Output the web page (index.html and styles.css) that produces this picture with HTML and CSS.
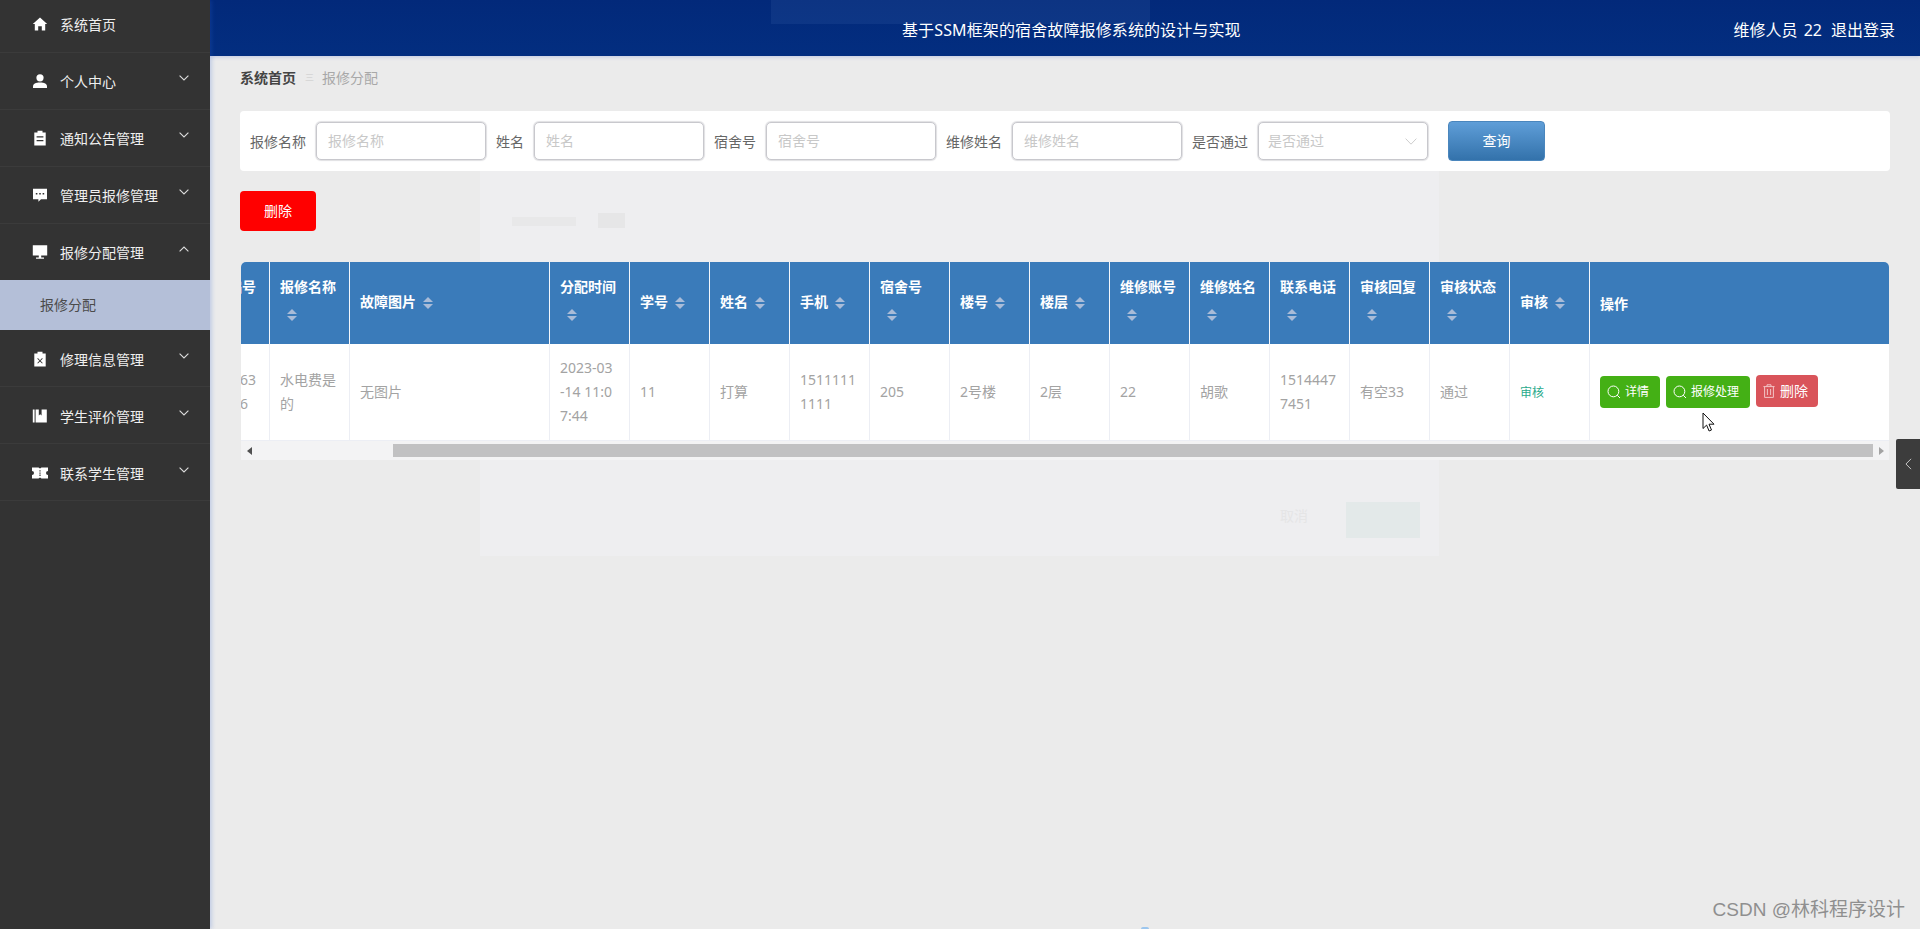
FILE: index.html
```html
<!DOCTYPE html>
<html lang="zh-CN">
<head>
<meta charset="utf-8">
<title>报修分配</title>
<link rel="stylesheet" href="styles.css">
</head>
<body>
<div class="app">
  <aside class="sidebar">
    <ul class="menu">
      <li class="menu-row"><svg class="mi" viewBox="0 0 16 16"><path d="M8 1.5 15.2 8H13.2v6.5H9.8V10.2H6.2v4.3H2.8V8H.8z"/></svg><span>系统首页</span></li>
      <li class="menu-row"><svg class="mi" viewBox="0 0 16 16"><circle cx="8" cy="4.8" r="3.6"/><path d="M1 15v-1.6c0-2.4 2.6-3.8 7-3.8s7 1.4 7 3.8V15z"/></svg><span>个人中心</span><svg class="chev" viewBox="0 0 10 6"><path d="M.6.6 5 5 9.4.6"/></svg></li>
      <li class="menu-row"><svg class="mi" viewBox="0 0 16 16"><path fill-rule="evenodd" d="M5.5.8h5V2.4h3.2v13.2H2.3V2.4h3.2zM4.6 6.2v1.2h6.8V6.2zM4.6 10v1.2h6.8V10z"/></svg><span>通知公告管理</span><svg class="chev" viewBox="0 0 10 6"><path d="M.6.6 5 5 9.4.6"/></svg></li>
      <li class="menu-row"><svg class="mi" viewBox="0 0 16 16"><path fill-rule="evenodd" d="M1 1.8h14v10.4H9l-2.6 2.6v-2.6H1zM3.8 6v1.6h1.6V6zM7.2 6v1.6h1.6V6zM10.6 6v1.6h1.6V6z"/></svg><span>管理员报修管理</span><svg class="chev" viewBox="0 0 10 6"><path d="M.6.6 5 5 9.4.6"/></svg></li>
      <li class="menu-row row-open"><svg class="mi" viewBox="0 0 16 16"><path d="M.8 1.2h14.4v10.4H.8zM6.8 11.6h2.4v2H12v1.2H4v-1.2h2.8z"/></svg><span>报修分配管理</span><svg class="chev" viewBox="0 0 10 6"><path d="M.6 5.4 5 1l4.4 4.4"/></svg></li>
      <li class="menu-sub">报修分配</li>
      <li class="menu-row row-low"><svg class="mi" viewBox="0 0 16 16"><path fill-rule="evenodd" d="M5.5.8h5V2.4h3.2v13.2H2.3V2.4h3.2zM5.9 7.1 8 9.2l2.1-2.1.6.6-2.1 2.1 2.1 2.1-.6.6L8 10.4l-2.1 2.1-.6-.6 2.1-2.1-2.1-2.1z"/></svg><span>修理信息管理</span><svg class="chev" viewBox="0 0 10 6"><path d="M.6.6 5 5 9.4.6"/></svg></li>
      <li class="menu-row row-low"><svg class="mi" viewBox="0 0 16 16"><path d="M.8 1.5h1.8v13H.8zM3.6 1.5h3.2v6l1.4-1.2 1.4 1.2v-6h5.2v13H3.6z"/></svg><span>学生评价管理</span><svg class="chev" viewBox="0 0 10 6"><path d="M.6.6 5 5 9.4.6"/></svg></li>
      <li class="menu-row row-low"><svg class="mi" viewBox="0 0 16 16"><path fill-rule="evenodd" d="M0 2.4h6.6l.7.9h1.4l.7-.9H16V6a2 2 0 0 0 0 4v3.6H9.4l-.7-.9H7.3l-.7.9H0V10a2 2 0 0 0 0-4zM7.4 5.2v1.4h1.2V5.2zM7.4 7.4v1.4h1.2V7.4zM7.4 9.6V11h1.2V9.6z"/></svg><span>联系学生管理</span><svg class="chev" viewBox="0 0 10 6"><path d="M.6.6 5 5 9.4.6"/></svg></li>
    </ul>
  </aside>

  <div class="main">
    <header class="topbar">
      <div class="topbar-title">基于SSM框架的宿舍故障报修系统的设计与实现</div>
      <div class="topbar-user"><span class="user-name">维修人员 22</span><span>退出登录</span></div>
    </header>

    <div class="page">
      <nav class="crumb"><b>系统首页</b><i>三</i><span>报修分配</span></nav>

      <form class="search">
        <label class="s-label">报修名称</label><div class="s-input">报修名称</div>
        <label class="s-label">姓名</label><div class="s-input">姓名</div>
        <label class="s-label">宿舍号</label><div class="s-input">宿舍号</div>
        <label class="s-label">维修姓名</label><div class="s-input">维修姓名</div>
        <label class="s-label">是否通过</label>
        <div class="s-input s-select">是否通过<svg viewBox="0 0 12 7"><path d="M.6.6 6 6.2 11.4.6"/></svg></div>
        <div class="s-query">查询</div>
      </form>

      <div class="tools"><div class="del-btn">删除</div></div>

      <div class="table-box">
        <div class="table-clip">
          <table class="grid">
            <colgroup>
              <col class="c80"><col class="c80"><col class="c200"><col class="c80"><col class="c80"><col class="c80"><col class="c80"><col class="c80"><col class="c80"><col class="c80"><col class="c80"><col class="c80"><col class="c80"><col class="c80"><col class="c80"><col class="c80"><col class="c300">
            </colgroup>
            <thead>
              <tr>
                <th>报修编号<span class="sort"><i class="up"></i><i class="down"></i></span></th>
                <th>报修名称<span class="sort"><i class="up"></i><i class="down"></i></span></th>
                <th>故障图片<span class="sort"><i class="up"></i><i class="down"></i></span></th>
                <th>分配时间<span class="sort"><i class="up"></i><i class="down"></i></span></th>
                <th>学号<span class="sort"><i class="up"></i><i class="down"></i></span></th>
                <th>姓名<span class="sort"><i class="up"></i><i class="down"></i></span></th>
                <th>手机<span class="sort"><i class="up"></i><i class="down"></i></span></th>
                <th>宿舍号<span class="sort"><i class="up"></i><i class="down"></i></span></th>
                <th>楼号<span class="sort"><i class="up"></i><i class="down"></i></span></th>
                <th>楼层<span class="sort"><i class="up"></i><i class="down"></i></span></th>
                <th>维修账号<span class="sort"><i class="up"></i><i class="down"></i></span></th>
                <th>维修姓名<span class="sort"><i class="up"></i><i class="down"></i></span></th>
                <th>联系电话<span class="sort"><i class="up"></i><i class="down"></i></span></th>
                <th>审核回复<span class="sort"><i class="up"></i><i class="down"></i></span></th>
                <th>审核状态<span class="sort"><i class="up"></i><i class="down"></i></span></th>
                <th>审核<span class="sort"><i class="up"></i><i class="down"></i></span></th>
                <th>操作</th>
              </tr>
            </thead>
            <tbody>
              <tr>
                <td>1678763<br>123456</td>
                <td>水电费是的</td>
                <td>无图片</td>
                <td>2023-03<br>-14 11:0<br>7:44</td>
                <td>11</td>
                <td>打算</td>
                <td>15111111111</td>
                <td>205</td>
                <td>2号楼</td>
                <td>2层</td>
                <td>22</td>
                <td>胡歌</td>
                <td>15144477451</td>
                <td>有空33</td>
                <td>通过</td>
                <td><span class="audit">审核</span></td>
                <td>
                  <div class="ops">
                    <div class="op op-green"><svg viewBox="0 0 14 14"><circle cx="6.4" cy="6.4" r="5.4"/><path d="m10.2 10.2 2.8 2.8"/></svg>详情</div>
                    <div class="op op-green"><svg viewBox="0 0 14 14"><circle cx="6.4" cy="6.4" r="5.4"/><path d="m10.2 10.2 2.8 2.8"/></svg>报修处理</div>
                    <div class="op op-red"><svg viewBox="0 0 12 14"><path d="M.4 2.6h11.2M4 2.4V.8h4v1.6M1.6 2.6v10.8h8.8V2.6M4.4 5v6M7.6 5v6"/></svg>删除</div>
                  </div>
                </td>
              </tr>
            </tbody>
          </table>
        </div>
        <div class="sbar">
          <div class="sb-btn"><i class="tri-l"></i></div>
          <div class="sb-track"><div class="sb-thumb"></div></div>
          <div class="sb-btn"><i class="tri-r"></i></div>
        </div>
      </div>
    </div>

    <div class="ghost-panel"></div>
    <div class="ghost-top"></div>
    <div class="ghost-bar-a"></div>
    <div class="ghost-bar-b"></div>
    <div class="ghost-cancel">取消</div>
    <div class="ghost-ok"></div>
  </div>
</div>

<div class="side-tab"><svg viewBox="0 0 8 14"><path d="M7 1 1 7l6 6"/></svg></div>
<svg class="cursor" viewBox="0 0 13 20"><path d="M1 1v15.5l3.6-3.4 2.5 5.9 2.4-1-2.5-5.8h5z"/></svg>
<div class="watermark">CSDN @林科程序设计</div>
<div class="edge-mark"></div>
</body>
</html>
```
FILE: styles.css
```css
* { box-sizing: border-box; }
html, body { margin: 0; height: 100%; overflow: hidden; }
body {
  font-family: "Noto Sans", "Noto Sans CJK SC", sans-serif;
  font-size: 14px;
  color: #666;
  background: #ebebeb;
}
.app { display: flex; height: 929px; }

/* sidebar */
.sidebar {
  width: 210px;
  flex: none;
  background: #333;
  overflow: hidden;
  position: relative;
  z-index: 3;
  box-shadow: 2px 0 4px rgba(50, 100, 210, .22);
}
.menu { list-style: none; margin: -4px 0 0; padding: 0; }
.menu-row {
  display: flex;
  align-items: center;
  height: 57px;
  padding: 0 21px 1px 32px;
  border-bottom: 1px solid #3b3b3b;
  color: #efefef;
}
.row-open { border-bottom: 0; height: 56px; }
.row-low { padding-top: 1px; padding-bottom: 0; }
.mi { width: 16px; height: 16px; fill: #fff; flex: none; margin-right: 12px; }
.chev { width: 10px; height: 6px; margin: -5px 0 0 auto; fill: none; stroke: #ddd; stroke-width: 1.1; }
.menu-sub {
  height: 50px;
  line-height: 49px;
  padding-left: 40px;
  background: #b4bfd8;
  color: #4b4b4b;
}

/* main column */
.main { flex: 1; min-width: 0; display: flex; flex-direction: column; position: relative; }
.topbar {
  height: 56px;
  flex: none;
  display: flex;
  align-items: center;
  justify-content: space-between;
  padding: 1px 25px 0 692px;
  background: linear-gradient(#02297a, #032e80);
  color: #fff;
  font-size: 16px;
  box-shadow: 0 1px 4px rgba(40, 80, 200, .22);
  position: relative;
  z-index: 2;
}
.topbar-title { letter-spacing: .12px; }
.topbar-user { display: flex; gap: 9px; }
.user-name { word-spacing: 2px; }

.page { flex: 1; padding: 0 30px; position: relative; z-index: 1; }

.crumb { display: flex; align-items: center; height: 22px; margin-top: 11px; line-height: 22px; }
.crumb b { font-weight: 700; color: #444; }
.crumb i { font-style: normal; font-size: 9px; color: #d4d4d4; margin: 0 8px 0 9px; }
.crumb span { color: #a8a8a8; }

.search {
  display: flex;
  align-items: center;
  height: 60px;
  margin: 22px 0 0;
  padding: 0 10px;
  background: #fff;
  border-radius: 4px;
}
.s-label { color: #666; margin-right: 10px; white-space: nowrap; }
.s-input {
  position: relative;
  width: 170px;
  height: 38px;
  margin-right: 10px;
  padding-left: 11px;
  line-height: 35px;
  border: 1px solid #c8c8cd;
  box-shadow: 0 0 1px 1px #e0e0e3;
  border-radius: 5px;
  color: #c8c8c8;
  background: #fff;
}
.s-select { padding-left: 9px; }
.s-select svg {
  position: absolute;
  right: 10px;
  top: 15px;
  width: 12px;
  height: 7px;
  fill: none;
  stroke: #cdcdcd;
}
.s-query {
  width: 97px;
  height: 40px;
  margin-left: 10px;
  line-height: 38px;
  text-align: center;
  color: #fff;
  background: linear-gradient(#5f9ed8, #3372ab);
  border: 1px solid #4a86bd;
  border-radius: 4px;
}

.tools { margin-top: 20px; }
.del-btn {
  width: 76px;
  height: 40px;
  line-height: 39px;
  text-align: center;
  color: #fff;
  background: #f00;
  border-radius: 4px;
}

/* table */
.table-box { margin: 31px 1px 0; }
.table-clip { overflow: hidden; border-radius: 5px 5px 0 0; background: #fff; }
.grid {
  table-layout: fixed;
  width: 1700px;
  margin-left: -51px;
  border-collapse: separate;
  border-spacing: 0;
}
.c80 { width: 80px; }
.c200 { width: 200px; }
.c300 { width: 300px; }
.grid th {
  height: 82px;
  padding: 12px 10px;
  line-height: 23px;
  text-align: left;
  font-weight: 700;
  color: #fff;
  background: #3a7bba;
  border-right: 1px solid #f4f7fb;
  word-break: break-all;
}
.grid th:last-child, .grid td:last-child { border-right: 0; }
.grid td {
  height: 97px;
  padding: 12px 10px;
  line-height: 24px;
  color: #a3a3a3;
  border-right: 1px solid #eceef4;
  border-bottom: 1px solid #eceef4;
  word-break: break-all;
}
.sort {
  display: inline-flex;
  flex-direction: column;
  align-items: center;
  justify-content: center;
  gap: 2px;
  width: 24px;
  height: 34px;
  vertical-align: middle;
}
.sort i { width: 0; height: 0; border-left: 5px solid transparent; border-right: 5px solid transparent; }
.sort .up { border-bottom: 5px solid #a9bcd8; }
.sort .down { border-top: 5px solid #a9bcd8; }
.audit { font-size: 12px; color: #2aaa8c; }

.ops { display: flex; align-items: center; gap: 6px; white-space: nowrap; }
.op {
  display: flex;
  align-items: center;
  gap: 4px;
  height: 32px;
  padding: 0 11px 0 7px;
  font-size: 12px;
  color: #fff;
  border-radius: 4px;
}
.op svg { width: 14px; height: 14px; fill: none; stroke: #fff; stroke-width: 1; flex: none; }
.op-green { background: #44b015; }
.op-red {
  gap: 5px;
  padding-right: 10px;
  font-size: 14px;
  background: #d9545a;
  margin-bottom: 2px;
}
.op-red svg { width: 12px; stroke: #f2c4c6; }

/* scroll bar */
.sbar { display: flex; height: 19px; background: #f3f3f4; }
.sb-btn { width: 16px; flex: none; display: flex; align-items: center; justify-content: center; }
.tri-l { border-top: 4px solid transparent; border-bottom: 4px solid transparent; border-right: 5px solid #505050; }
.tri-r { border-top: 4px solid transparent; border-bottom: 4px solid transparent; border-left: 5px solid #a3a3a3; }
.sb-track { flex: 1; padding: 3px 0 3px 136px; }
.sb-thumb { height: 13px; background: #c1c1c2; }

/* faint traces of the dialog behind the page */
.ghost-panel { position: absolute; left: 270px; top: 116px; width: 959px; height: 440px; background: #eeeef0; }
.ghost-top { position: absolute; left: 561px; top: 0; width: 379px; height: 24px; background: rgba(60, 100, 170, .2); z-index: 2; }
.ghost-bar-a { position: absolute; left: 302px; top: 217px; width: 64px; height: 9px; background: #e8e8e9; }
.ghost-bar-b { position: absolute; left: 388px; top: 213px; width: 27px; height: 15px; background: #e6e6e7; }
.ghost-cancel { position: absolute; left: 1070px; top: 505px; color: #e5e5e6; }
.ghost-ok { position: absolute; left: 1136px; top: 502px; width: 74px; height: 36px; background: #e3e9e9; }

/* overlays */
.side-tab {
  position: absolute;
  right: 0;
  top: 439px;
  width: 24px;
  height: 50px;
  display: flex;
  align-items: center;
  justify-content: center;
  background: #3c3c3c;
  border-radius: 2px 0 0 2px;
  z-index: 5;
}
.side-tab svg { width: 7px; height: 12px; fill: none; stroke: #cfcfcf; stroke-width: 1.1; }
.cursor {
  position: absolute;
  left: 1702px;
  top: 412px;
  width: 13px;
  height: 20px;
  fill: #fff;
  stroke: #111;
  stroke-width: 1;
  z-index: 5;
}
.watermark {
  position: absolute;
  right: 15px;
  top: 896px;
  font-family: "Liberation Sans", "Noto Sans CJK SC", sans-serif;
  font-size: 19px;
  line-height: 28px;
  color: #8f8f8f;
  white-space: nowrap;
  z-index: 5;
}
.edge-mark {
  position: absolute;
  left: 1141px;
  bottom: 0;
  width: 8px;
  height: 2px;
  background: #9cc6ee;
  border-radius: 4px 4px 0 0;
  z-index: 5;
}
```
